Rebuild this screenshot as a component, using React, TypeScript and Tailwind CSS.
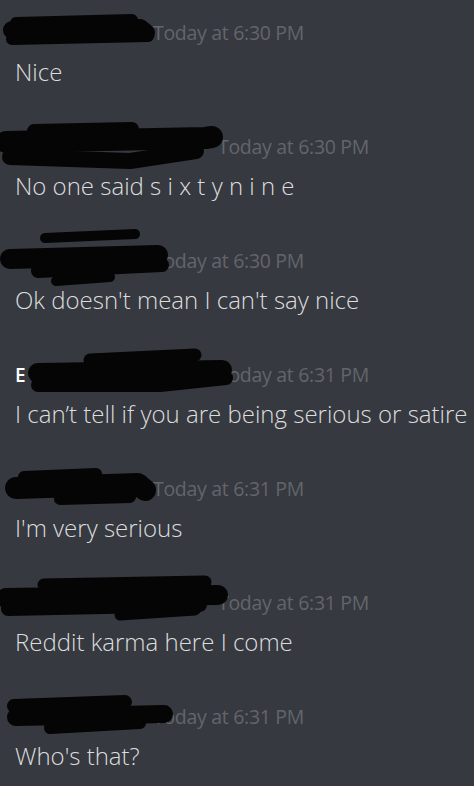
type Stroke = { d: string; w: number };

type Msg = {
  name: string;
  time: string;
  text: string;
  gap: number;
  strokes: Stroke[];
};

// scribble coords: x = page x, y = page y - (header center - 36)
const messages: Msg[] = [
  {
    name: "‐",
    time: "Today at 6:30 PM",
    text: "Nice",
    gap: 153,
    strokes: [
      { d: "M16 26 L132 23", w: 12 },
      { d: "M12 33 L140 31 L146 36", w: 18 },
      { d: "M12 42 L148 39", w: 12 },
    ],
  },
  {
    name: "",
    time: "Today at 6:30 PM",
    text: "No one said s i x t y n i n e",
    gap: 218,
    strokes: [
      { d: "M34 20 L132 18", w: 14 },
      { d: "M6 31 L205 27 L212 26", w: 22 },
      { d: "M10 46 L130 50 L196 40", w: 16 },
    ],
  },
  {
    name: "C",
    time: "Today at 6:30 PM",
    text: "Ok doesn't mean I can't say nice",
    gap: 153,
    strokes: [
      { d: "M45 13 L135 9", w: 10 },
      { d: "M10 34 L158 30", w: 20 },
      { d: "M38 46 L162 40", w: 14 },
      { d: "M56 56 L110 52", w: 10 },
    ],
  },
  {
    name: "E",
    time: "Today at 6:31 PM",
    text: "I can’t tell if you are being serious or satire",
    gap: 218,
    strokes: [
      { d: "M90 21 L195 16", w: 13 },
      { d: "M38 34 L222 31", w: 20 },
      { d: "M38 46 L160 46 L226 39", w: 14 },
    ],
  },
  {
    name: "",
    time: "Today at 6:31 PM",
    text: "I'm very serious",
    gap: 153,
    strokes: [
      { d: "M24 24 L96 21", w: 12 },
      { d: "M16 35 L138 31 L145 37", w: 22 },
      { d: "M60 46 L130 44", w: 12 },
    ],
  },
  {
    name: "F",
    time: "Today at 6:31 PM",
    text: "Reddit karma here I come",
    gap: 218,
    strokes: [
      { d: "M44 18 L205 15", w: 13 },
      { d: "M6 31 L218 28", w: 20 },
      { d: "M8 42 L200 38", w: 14 },
      { d: "M120 48 L195 43", w: 11 },
    ],
  },
  {
    name: "",
    time: "Today at 6:31 PM",
    text: "Who's that?",
    gap: 153,
    strokes: [
      { d: "M14 25 L125 21", w: 14 },
      { d: "M16 36 L120 34 L164 33", w: 18 },
      { d: "M50 47 L140 42", w: 12 },
    ],
  },
];

const Scribble = ({ strokes }: { strokes: Stroke[] }) => (
  <svg
    className="absolute left-0 top-[-24px] pointer-events-none"
    width="260"
    height="72"
    viewBox="0 0 260 72"
  >
    {strokes.map((s, i) => (
      <path
        key={i}
        d={s.d}
        stroke="#050505"
        strokeWidth={s.w}
        strokeLinecap="round"
        strokeLinejoin="round"
        fill="none"
      />
    ))}
  </svg>
);

const Message = ({ m }: { m: Msg }) => (
  <div className="flex flex-col">
    <div className="relative flex items-center h-6">
      <span className="shrink-0 pl-[15px] text-[19px] font-semibold text-white" style={{ width: m.gap }}>
        {m.name}
      </span>
      <span className="text-[19.5px] text-[#62656b] tracking-[-0.3px] whitespace-nowrap">{m.time}</span>
      <Scribble strokes={m.strokes} />
    </div>
    <p className="mt-3 pl-[15px] h-[30px] leading-[30px] text-[24px] font-light text-[#dcddde] whitespace-nowrap">
      {m.text}
    </p>
  </div>
);

export default function App() {
  return (
    <div className="w-[474px] h-[786px] overflow-hidden bg-[#36393f] pt-[21px] flex flex-col gap-12 font-['Open_Sans',sans-serif]">
      {messages.map((m, i) => (
        <Message key={i} m={m} />
      ))}
    </div>
  );
}
